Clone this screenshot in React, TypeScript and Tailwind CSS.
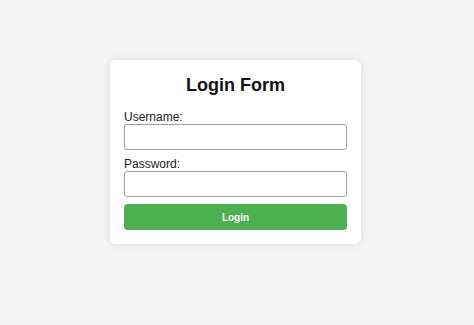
import React from "react";

export default function App() {
  return (
    <div className="min-h-[325px] w-full bg-[#f3f3f3] pt-[60px] pb-[82px]" style={{ fontFamily: '"Liberation Sans", Arial, sans-serif' }}>
      <div className="ml-[110px] w-[251px] rounded-[6px] bg-white px-[14px] pt-[15px] pb-[14px] shadow-[0_0_8px_rgba(0,0,0,0.1)]">
        <h2 className="text-center text-[18px] font-bold leading-[21px] text-[#111]">Login Form</h2>
        <form className="mt-[14px] flex flex-col" onSubmit={(e) => e.preventDefault()}>
          <label className="text-[12px] leading-[14px] text-[#222]">Username:</label>
          <input type="text" className="h-[26px] w-full rounded-[3px] border border-[#a0a0a0] bg-white px-1 text-[12px] outline-none" />
          <label className="mt-[7px] text-[12px] leading-[14px] text-[#222]">Password:</label>
          <input type="password" className="h-[26px] w-full rounded-[3px] border border-[#a0a0a0] bg-white px-1 text-[12px] outline-none" />
          <button type="submit" className="mt-[7px] h-[26px] w-full rounded-[4px] bg-[#4caf50] text-[10px] font-bold text-white">Login</button>
        </form>
      </div>
    </div>
  );
}
